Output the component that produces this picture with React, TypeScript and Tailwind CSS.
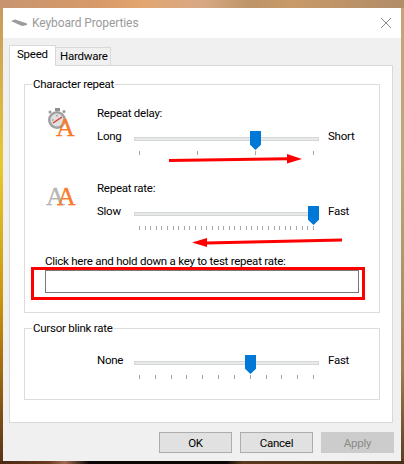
const font = "font-['Roboto',sans-serif] text-[11.5px] leading-[16px] tracking-[-0.25px]";

const Slider = ({ ticks, thumb }: { ticks: number; thumb: string }) => (
  <div className="relative w-[185px] pt-[9px]">
    <div className="h-[4px] border border-[#d6d6d6] bg-[#e7eaea]" />
    <div className="mt-[10px] flex h-[4px] justify-between px-[5px]">
      {Array.from({ length: ticks }).map((_, i) => (
        <div key={i} className="h-full w-px bg-[#a8a8a8]" />
      ))}
    </div>
    <div className={`absolute top-[3px] h-[19px] w-[11px] bg-[#0078d7] [clip-path:polygon(0_0,100%_0,100%_72%,50%_100%,0_72%)] ${thumb}`} />
  </div>
);

const SliderRow = ({ low, high, ticks, thumb }: { low: string; high: string; ticks: number; thumb: string }) => (
  <div className="flex">
    <div className="w-[37px]">{low}</div>
    <Slider ticks={ticks} thumb={thumb} />
    <div className="ml-[9px]">{high}</div>
  </div>
);

const Group = ({ title, children, className }: { title: string; children: React.ReactNode; className: string }) => (
  <div className={`relative w-[356px] border border-[#dcdcdc] ${className}`}>
    <div className="absolute left-[7px] top-[-9px] bg-white px-px">{title}</div>
    {children}
  </div>
);

const DelayIcon = () => (
  <svg width="34" height="36" viewBox="0 0 34 36">
    <rect x="9" y="0" width="5" height="3" fill="#8f8f8f" />
    <circle cx="4" cy="4" r="1.5" fill="#9a9a9a" />
    <circle cx="18" cy="3.5" r="1.5" fill="#9a9a9a" />
    <circle cx="11" cy="12" r="9" fill="#a0a0a0" />
    <circle cx="11" cy="12" r="6.5" fill="#e0e0e0" />
    <path d="M7 15 L16 9" stroke="#d8402c" strokeWidth="1.5" />
    <path d="M11 7v1.5M6 12h1.5" stroke="#777" strokeWidth="1" />
    <text x="10" y="28" fontFamily="Liberation Serif" fontSize="26" fill="#f97a28" stroke="#f97a28" strokeWidth="0.3">A</text>
  </svg>
);

const RateIcon = () => (
  <svg width="34" height="30" viewBox="0 0 34 30">
    <text x="0" y="24" fontFamily="Liberation Serif" fontSize="26" fill="#b4b4b4" stroke="#b4b4b4" strokeWidth="0.3">A</text>
    <text x="11" y="24" fontFamily="Liberation Serif" fontSize="26" fill="#f97a28" stroke="#f97a28" strokeWidth="0.3">A</text>
  </svg>
);

const Button = ({ label, disabled }: { label: string; disabled?: boolean }) => (
  <button
    className={`h-[21px] w-[73px] border text-center ${
      disabled ? 'border-[#cccccc] bg-[#cccccc] text-[#8a8a8a]' : 'border-[#adadad] bg-[#e1e1e1] text-black'
    }`}
  >
    {label}
  </button>
);

export default function App() {
  return (
    <div className={`relative flex h-[464px] w-[404px] flex-col overflow-hidden text-black ${font}`}>
      {/* Wallpaper round the window */}
      <div className="h-[8px] bg-[linear-gradient(90deg,#c79470,#d89a68_25%,#e3a670_35%,#d8a885_50%,#bd9468_62%,#c99a68_72%,#b08c68)]" />
      <div className="flex h-[453px]">
        <div className="w-[3px] bg-[linear-gradient(180deg,#c89a60,#e8c830_35%,#c8940c_65%,#a06a10_80%,#5a3418)]" />
        <div className="flex w-[398px] flex-col bg-[#f0f0f0]">
          {/* Title bar */}
          <div className="flex h-[30px] items-center bg-white pl-[8px] pr-[10px]">
            <svg width="16" height="8" viewBox="0 0 16 8">
              <path d="M0 2 L4 0.5 L16 4.5 L16 6 L11 7 Z" fill="#9a9a9a" />
            </svg>
            <span className="ml-[5px] flex-1 text-[12px] tracking-[-0.1px] text-[#9b9b9b]">Keyboard Properties</span>
            <svg width="10" height="10" viewBox="0 0 10 10">
              <path d="M0 0 L10 10 M10 0 L0 10" stroke="#8a8a8a" strokeWidth="1" />
            </svg>
          </div>

          <div className="pl-[6px] pt-[7px]">
            {/* Tabs */}
            <div className="relative z-10 mb-[-1px] flex items-end">
              <div className="h-[21px] w-[47px] border border-b-0 border-[#d9d9d9] bg-white pl-[7px]">Speed</div>
              <div className="mb-px h-[18px] w-[55px] border border-b-0 border-l-0 border-[#d9d9d9] bg-[#f0f0f0] pl-[4px]">Hardware</div>
            </div>

            {/* Tab panel */}
            <div className="w-[384px] border border-[#d9d9d9] bg-white pb-[22px] pl-[14px] pt-[18px]">
              <Group title="Character repeat" className="pb-[19px] pt-[20px]">
                <div className="flex">
                  <div className="h-[50px] w-[72px] pl-[21px] pt-[3px]">
                    <DelayIcon />
                  </div>
                  <div>
                    <div>Repeat delay:</div>
                    <div className="mt-[7px]">
                      <SliderRow low="Long" high="Short" ticks={4} thumb="left-[116px]" />
                    </div>
                  </div>
                </div>
                <div className="mt-[25px] flex">
                  <div className="h-[50px] w-[72px] pl-[21px] pt-[1px]">
                    <RateIcon />
                  </div>
                  <div>
                    <div>Repeat rate:</div>
                    <div className="mt-[7px]">
                      <SliderRow low="Slow" high="Fast" ticks={32} thumb="left-[174px]" />
                    </div>
                  </div>
                </div>
                <div className="ml-[20px] mt-[23px]">Click here and hold down a key to test repeat rate:</div>
                <div className="ml-[20px] mt-px h-[23px] w-[314px] border border-[#7a7a7a] bg-white" />
              </Group>

              <Group title="Cursor blink rate" className="mt-[15px] pb-[20px] pl-[72px] pt-[23px]">
                <SliderRow low="None" high="Fast" ticks={12} thumb="left-[111px]" />
              </Group>
            </div>
          </div>

          {/* Dialog buttons */}
          <div className="mt-[9px] flex justify-end gap-[8px] pr-[7px]">
            <Button label="OK" />
            <Button label="Cancel" />
            <Button label="Apply" disabled />
          </div>
        </div>
        <div className="w-[3px] bg-[linear-gradient(180deg,#c9a178,#b8a878_35%,#a89060_65%,#9c7c50_80%,#5a4020)]" />
      </div>
      <div className="flex-1 bg-[linear-gradient(90deg,#4a2812,#6a3a20_12%,#a06a50_16%,#0c0806_22%,#0c0806_56%,#5a3a1e_60%,#4a3018)]" />

      {/* Red annotations drawn over the screenshot */}
      <div className="absolute left-[31px] top-[267px] h-[33px] w-[334px] border-[3px] border-[#ff0000]" />
      <svg className="absolute left-0 top-0" width="404" height="464" viewBox="0 0 404 464">
        <path d="M169 160.5 L288 158.7" stroke="#ff0000" strokeWidth="3" />
        <path d="M287 154 L302 159 L287 163.5 Z" fill="#ff0000" />
        <path d="M342 240 L206 243" stroke="#ff0000" strokeWidth="3" />
        <path d="M207 238 L192 242.5 L207 247 Z" fill="#ff0000" />
      </svg>
    </div>
  );
}
